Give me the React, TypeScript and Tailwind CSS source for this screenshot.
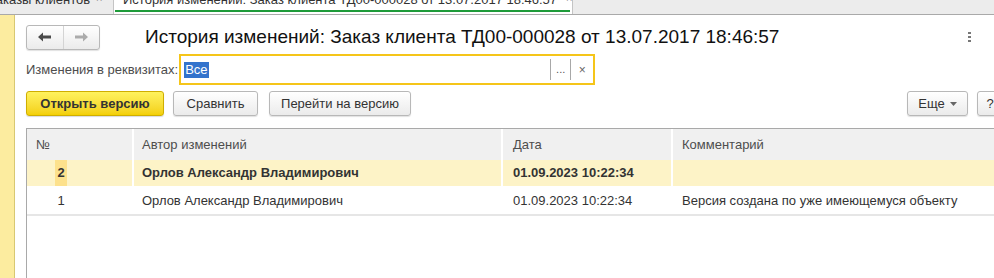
import React from 'react';

const btn =
  'h-[25px] rounded-[3px] border border-[#b8b8b8] bg-gradient-to-b from-white to-[#ebebeb] shadow-[0_1px_1px_rgba(0,0,0,0.12)] text-[13px] text-[#333] flex items-center';

function Arrow({ dir, color }: { dir: 'left' | 'right'; color: string }) {
  return (
    <svg width="14" height="10" viewBox="0 0 14 10" className={dir === 'right' ? 'rotate-180' : ''}>
      <path d="M0 5 L5 0.5 L5 3.5 L13 3.5 L13 6.5 L5 6.5 L5 9.5 Z" fill={color} />
    </svg>
  );
}

const rows = [
  { n: '2', author: 'Орлов Александр Владимирович', date: '01.09.2023 10:22:34', comment: '', current: true },
  {
    n: '1',
    author: 'Орлов Александр Владимирович',
    date: '01.09.2023 10:22:34',
    comment: 'Версия создана по уже имеющемуся объекту',
    current: false,
  },
];

export default function App() {
  return (
    <div className="w-[994px] h-[278px] overflow-hidden bg-white font-['Liberation_Sans',Arial,sans-serif] flex flex-col">
      {/* Tab strip (cut at the top) */}
      <div className="h-[15px] shrink-0 flex bg-[#ececec] border-b border-[#a9a9a9] text-[13px] leading-none overflow-hidden">
        <div className="w-[114px] flex items-start border-r border-[#c4c4c4] text-[#333] overflow-hidden">
          <span className="-mt-[7px] -ml-[12px] whitespace-nowrap">Заказы клиентов</span>
          <span className="-mt-[7px] ml-[6px] text-[11px] text-[#555]">×</span>
        </div>
        <div className="w-[459px] bg-white border-r border-[#c4c4c4] relative flex items-start pl-[9px]">
          <span className="-mt-[7px] whitespace-nowrap text-[#333]">
            История изменений: Заказ клиента ТД00-000028 от 13.07.2017 18:46:57
          </span>
          <span className="-mt-[7px] ml-[9px] text-[11px] text-[#555]">×</span>
          <div className="absolute left-[1px] right-[2px] top-[10px] h-[2px] bg-[#1e9b3a]" />
        </div>
      </div>

      <div className="flex flex-1 min-h-0">
        {/* Left stripe */}
        <div className="w-[15px] shrink-0 bg-[#fcec9f] border-r border-[#d8c872]" />

        <div className="flex-1 min-w-0 pl-[11px] flex flex-col">
          {/* Header */}
          <div className="h-[39px] flex items-center pt-[5px]">
            <div className="h-[25px] w-[74px] rounded-[3px] border border-[#b8b8b8] bg-gradient-to-b from-white to-[#ebebeb] shadow-[0_1px_1px_rgba(0,0,0,0.12)] flex">
              <div className="flex-1 flex items-center justify-center border-r border-[#d4d4d4]">
                <Arrow dir="left" color="#4a4a4a" />
              </div>
              <div className="flex-1 flex items-center justify-center">
                <Arrow dir="right" color="#ababab" />
              </div>
            </div>
            <h1 className="ml-[45px] text-[19px] text-[#111] whitespace-nowrap">
              История изменений: Заказ клиента ТД00-000028 от 13.07.2017 18:46:57
            </h1>
            <div className="ml-auto mr-[23px] flex flex-col gap-[2px]">
              <span className="w-[3px] h-[2px] bg-[#777]" />
              <span className="w-[3px] h-[2px] bg-[#777]" />
              <span className="w-[3px] h-[2px] bg-[#777]" />
            </div>
          </div>

          {/* Filter row */}
          <div className="h-[31px] flex items-center">
            <span className="text-[13px] text-[#4d4d4d] whitespace-nowrap">Изменения в реквизитах:</span>
            <div className="ml-[1px] w-[416px] h-[31px] border-2 border-[#f5c519] flex items-center bg-white">
              <span className="ml-[3px] px-[1px] text-[13px] leading-[16px] bg-[#3373cc] text-white">Все</span>
              <div className="ml-auto h-[21px] w-px bg-[#a8a8a8]" />
              <span className="w-[19px] text-center text-[11px] text-[#555] leading-none">...</span>
              <div className="h-[21px] w-px bg-[#a8a8a8]" />
              <span className="w-[22px] text-center text-[12px] text-[#666] leading-none">×</span>
            </div>
          </div>

          {/* Command bar */}
          <div className="mt-[6px] flex items-center">
            <button className="h-[25px] w-[138px] rounded-[3px] border border-[#cfae00] bg-gradient-to-b from-[#fff25c] to-[#f3d000] shadow-[0_1px_1px_rgba(0,0,0,0.15)] text-[13px] font-bold text-[#333] flex items-center justify-center">
              Открыть версию
            </button>
            <button className={`${btn} ml-[9px] w-[85px] justify-center`}>Сравнить</button>
            <button className={`${btn} ml-[11px] w-[142px] justify-center`}>Перейти на версию</button>
            <button className={`${btn} ml-auto w-[61px] justify-center gap-[5px]`}>
              Еще
              <svg width="7" height="4" viewBox="0 0 7 4">
                <path d="M0 0 L7 0 L3.5 4 Z" fill="#666" />
              </svg>
            </button>
            <button className={`${btn} ml-[9px] w-[26px] -mr-[9px] justify-center`}>?</button>
          </div>

          {/* Table */}
          <div className="mt-[12px] flex-1 border-t border-l border-[#a9a9a9] text-[13px]">
            <div className="h-[31px] flex bg-[#f0f0f0] text-[#4d4d4d]">
              <div className="w-[107px] pl-[9px] flex items-center border-r-2 border-white">№</div>
              <div className="w-[369px] pl-[8px] flex items-center border-r-2 border-white">Автор изменений</div>
              <div className="w-[170px] pl-[10px] flex items-center border-r-2 border-white">Дата</div>
              <div className="flex-1 pl-[9px] flex items-center">Комментарий</div>
            </div>
            {rows.map((r) => (
              <div
                key={r.n}
                className={`h-[28px] flex border-b-2 ${
                  r.current ? 'bg-[#fdf3c7] font-bold text-[#333] border-white' : 'bg-white text-[#333] border-[#e6e6e6]'
                }`}
              >
                <div className={`w-[107px] flex items-stretch border-r-2 ${r.current ? 'border-white' : 'border-transparent'}`}>
                  <span
                    className={`ml-[28px] w-[12px] flex items-center justify-center ${r.current ? 'bg-[#fde18c]' : ''}`}
                  >
                    {r.n}
                  </span>
                </div>
                <div className={`w-[369px] pl-[8px] flex items-center border-r-2 ${r.current ? 'border-white' : 'border-transparent'}`}>
                  {r.author}
                </div>
                <div className={`w-[170px] pl-[10px] flex items-center border-r-2 ${r.current ? 'border-white' : 'border-transparent'}`}>
                  {r.date}
                </div>
                <div className="flex-1 pl-[9px] flex items-center whitespace-nowrap">{r.comment}</div>
              </div>
            ))}
          </div>
        </div>
      </div>
    </div>
  );
}
